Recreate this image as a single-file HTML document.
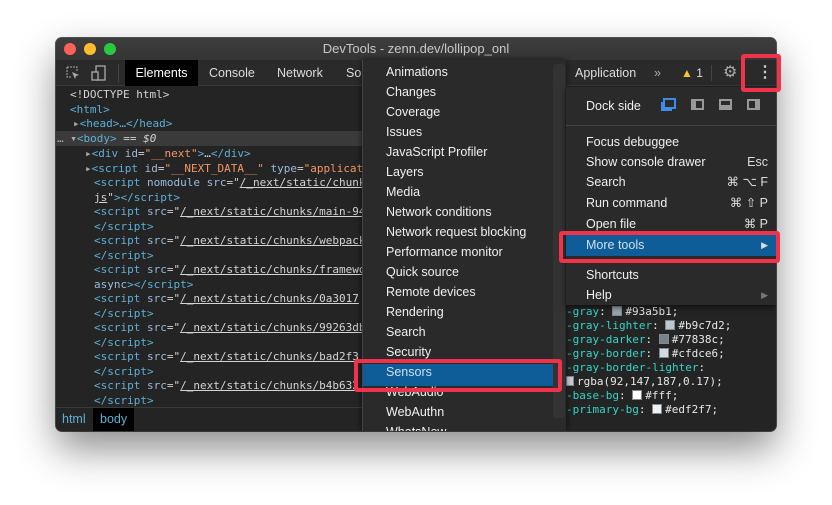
<!DOCTYPE html>
<html><head><style>
*{margin:0;padding:0;box-sizing:border-box}
body{width:832px;height:505px;background:#fff;position:relative;overflow:hidden;font-family:"Liberation Sans",sans-serif}
.win{position:absolute;left:56px;top:38px;width:720px;height:393px;background:#242424;border-radius:6px;overflow:hidden;box-shadow:0 18px 40px rgba(0,0,0,.45),0 0 0 1px #555}
.title{position:absolute;left:0;top:0;width:720px;height:22px;background:linear-gradient(#3d3d3d,#353535);color:#c8c8c8;font-size:13px;text-align:center;line-height:22px}
.dot{position:absolute;top:5px;width:12px;height:12px;border-radius:50%}
.tb{position:absolute;left:0;top:22px;width:720px;height:26px;background:#2a2a2a;border-bottom:1px solid #3a3a3a;color:#ddd;font-size:12.5px}
.tab{position:absolute;top:0;height:26px;line-height:26px}
.code{position:absolute;left:0;top:49px;width:306px;height:320px;font-family:"DejaVu Sans Mono","Liberation Mono",monospace;font-size:11px;color:#d4d4d4;white-space:pre}
.l{position:absolute;height:14.5px;line-height:14.5px}
.t{color:#5db0d7}.a{color:#9bbbdc}.v{color:#f29766}.u{color:#d4d4d4;text-decoration:underline}
.crumb{position:absolute;left:0;top:369px;width:306px;height:24px;border-top:1px solid #3a3a3a;background:#242424;font-size:12.5px;color:#5db0d7}
.sub{position:absolute;left:306px;top:22px;width:204px;height:371px;background:#2a2a2a;border-left:1px solid #444;box-shadow:0 0 6px rgba(0,0,0,.6)}
.sub div.i{position:absolute;left:23px;color:#f0f0f0;font-size:12.5px;height:20px;line-height:20px}
.rm{position:absolute;left:510px;top:49px;width:210px;height:218px;background:#2a2a2a;color:#f0f0f0;font-size:12.5px;box-shadow:0 2px 6px rgba(0,0,0,.6)}
.rm .i{position:absolute;left:20px;height:20px;line-height:20px}
.rm .k{position:absolute;right:8px;height:20px;line-height:20px;color:#ddd}
.red{position:absolute;border:4px solid #f0334a;border-radius:3px}
.sty{position:absolute;left:510px;top:267px;width:210px;height:102px;font-family:"DejaVu Sans Mono","Liberation Mono",monospace;font-size:11px;color:#e8e8e8;white-space:pre}
.sty .n{color:#35d4c7}
.sw{display:inline-block;width:10px;height:10px;border:1px solid #888;vertical-align:-1px;margin-right:3px}
</style></head><body>
<div class="win">
 <div class="title">DevTools - zenn.dev/lollipop_onl
  <div class="dot" style="left:8px;background:#fe5f57"></div>
  <div class="dot" style="left:28px;background:#febc2e"></div>
  <div class="dot" style="left:48px;background:#28c840"></div>
 </div>
 <div class="tb">
  <svg style="position:absolute;left:10px;top:6px" width="14" height="14" viewBox="0 0 14 14"><path d="M1 1h10v4M1 1v10h4" stroke="#aaa" fill="none" stroke-dasharray="2 1"/><path d="M6 6l7 3-3 1-1 3z" fill="#aaa"/></svg>
  <svg style="position:absolute;left:35px;top:5px" width="16" height="16" viewBox="0 0 16 16"><rect x="5" y="1" width="9" height="14" fill="none" stroke="#aaa" stroke-width="1.3"/><rect x="1" y="7" width="6" height="8" fill="#2a2a2a" stroke="#aaa" stroke-width="1.3"/></svg>
  <div style="position:absolute;left:62px;top:4px;width:1px;height:18px;background:#444"></div>
  <div class="tab" style="left:69px;width:73px;background:#000;color:#fff;text-align:center">Elements</div>
  <div class="tab" style="left:153px">Console</div>
  <div class="tab" style="left:221px">Network</div>
  <div class="tab" style="left:290px">So</div>
  <div class="tab" style="left:519px">Application</div>
  <div class="tab" style="left:598px;color:#aaa">»</div>
  <div class="tab" style="left:625px;font-size:12px"><span style="color:#f4c430">▲</span> 1</div>
  <div style="position:absolute;left:655px;top:5px;width:1px;height:16px;background:#444"></div>
  <div class="tab" style="left:667px;color:#aaa;font-size:16px">⚙</div>
  <div class="tab" style="left:701px;color:#ccc;font-size:16px;font-weight:bold">⋮</div>
 </div>
 <div class="code">
  <div style="position:absolute;left:0;top:44px;width:306px;height:14.5px;background:#3a3a3a"></div>
  <div class="l" style="left:14px;top:1px">&lt;!DOCTYPE html&gt;</div>
  <div class="l t" style="left:14px;top:16px">&lt;html&gt;</div>
  <div class="l" style="left:17px;top:30px"><span style="color:#aaa">▸</span><span class="t">&lt;head&gt;…&lt;/head&gt;</span></div>
  <div class="l" style="left:1px;top:45px"><span style="color:#aaa">… ▾</span><span class="t">&lt;body&gt;</span> == <i>$0</i></div>
  <div class="l" style="left:29px;top:60px"><span style="color:#aaa">▸</span><span class="t">&lt;div </span><span class="a">id</span>=<span class="v">"__next"</span><span class="t">&gt;</span>…<span class="t">&lt;/div&gt;</span></div>
  <div class="l" style="left:29px;top:75px"><span style="color:#aaa">▸</span><span class="t">&lt;script </span><span class="a">id</span>=<span class="v">"__NEXT_DATA__"</span> <span class="a">type</span>=<span class="v">"applicat</span></div>
  <div class="l" style="left:38px;top:89px"><span class="t">&lt;script </span><span class="a">nomodule src</span>="<span class="u">/_next/static/chunk</span></div>
  <div class="l" style="left:38px;top:104px"><span class="u">js</span>"<span class="t">&gt;&lt;/script&gt;</span></div>
  <div class="l" style="left:38px;top:118px"><span class="t">&lt;script </span><span class="a">src</span>="<span class="u">/_next/static/chunks/main-94</span></div>
  <div class="l t" style="left:38px;top:133px">&lt;/script&gt;</div>
  <div class="l" style="left:38px;top:147px"><span class="t">&lt;script </span><span class="a">src</span>="<span class="u">/_next/static/chunks/webpack</span></div>
  <div class="l t" style="left:38px;top:162px">&lt;/script&gt;</div>
  <div class="l" style="left:38px;top:176px"><span class="t">&lt;script </span><span class="a">src</span>="<span class="u">/_next/static/chunks/framewo</span></div>
  <div class="l" style="left:38px;top:191px"><span class="a">async</span><span class="t">&gt;&lt;/script&gt;</span></div>
  <div class="l" style="left:38px;top:205px"><span class="t">&lt;script </span><span class="a">src</span>="<span class="u">/_next/static/chunks/0a3017</span></div>
  <div class="l t" style="left:38px;top:220px">&lt;/script&gt;</div>
  <div class="l" style="left:38px;top:234px"><span class="t">&lt;script </span><span class="a">src</span>="<span class="u">/_next/static/chunks/99263db</span></div>
  <div class="l t" style="left:38px;top:249px">&lt;/script&gt;</div>
  <div class="l" style="left:38px;top:263px"><span class="t">&lt;script </span><span class="a">src</span>="<span class="u">/_next/static/chunks/bad2f3</span></div>
  <div class="l t" style="left:38px;top:278px">&lt;/script&gt;</div>
  <div class="l" style="left:38px;top:292px"><span class="t">&lt;script </span><span class="a">src</span>="<span class="u">/_next/static/chunks/b4b632</span></div>
  <div class="l t" style="left:38px;top:307px">&lt;/script&gt;</div>
 </div>
 <div class="crumb"><span style="position:absolute;left:6px;top:4px">html</span><span style="position:absolute;left:37px;top:0;width:41px;height:24px;background:#000;padding:4px 0 0 7px">body</span></div>
 <div class="sty">
  <div style="position:absolute;left:0;top:0"><span class="n">-gray</span>: <span class="sw" style="background:#93a5b1"></span>#93a5b1;</div>
  <div style="position:absolute;left:0;top:14px"><span class="n">-gray-lighter</span>: <span class="sw" style="background:#b9c7d2"></span>#b9c7d2;</div>
  <div style="position:absolute;left:0;top:28px"><span class="n">-gray-darker</span>: <span class="sw" style="background:#77838c"></span>#77838c;</div>
  <div style="position:absolute;left:0;top:42px"><span class="n">-gray-border</span>: <span class="sw" style="background:#cfdce6"></span>#cfdce6;</div>
  <div style="position:absolute;left:0;top:56px"><span class="n">-gray-border-lighter</span>:</div>
  <div style="position:absolute;left:0;top:70px"><span class="sw" style="background:#ccd;width:8px"></span>rgba(92,147,187,0.17);</div>
  <div style="position:absolute;left:0;top:84px"><span class="n">-base-bg</span>: <span class="sw" style="background:#fff"></span>#fff;</div>
  <div style="position:absolute;left:0;top:98px"><span class="n">-primary-bg</span>: <span class="sw" style="background:#edf2f7"></span>#edf2f7;</div>
 </div>
 <div class="sub">
  <div style="position:absolute;left:190px;top:4px;width:12px;height:354px;background:#333;border-radius:3px"></div>
  <div style="position:absolute;left:0;top:304px;width:190px;height:22px;background:#0e5d99"></div>
  <div class="i" style="top:2px">Animations</div>
  <div class="i" style="top:22px">Changes</div>
  <div class="i" style="top:42px">Coverage</div>
  <div class="i" style="top:62px">Issues</div>
  <div class="i" style="top:82px">JavaScript Profiler</div>
  <div class="i" style="top:102px">Layers</div>
  <div class="i" style="top:122px">Media</div>
  <div class="i" style="top:142px">Network conditions</div>
  <div class="i" style="top:162px">Network request blocking</div>
  <div class="i" style="top:182px">Performance monitor</div>
  <div class="i" style="top:202px">Quick source</div>
  <div class="i" style="top:222px">Remote devices</div>
  <div class="i" style="top:242px">Rendering</div>
  <div class="i" style="top:262px">Search</div>
  <div class="i" style="top:282px">Security</div>
  <div class="i" style="top:302px;color:#cfe0ef">Sensors</div>
  <div class="i" style="top:322px">WebAudio</div>
  <div class="i" style="top:342px">WebAuthn</div>
  <div class="i" style="top:362px">WhatsNew</div>
 </div>
 <div class="rm">
  <div class="i" style="top:9px">Dock side</div>
  <div style="position:absolute;left:97px;top:11px;width:13px;height:11px;border:2px solid #3b8de8;box-shadow:-3px 3px 0 -1px #3b8de8"></div>
  <div style="position:absolute;left:125px;top:12px;width:13px;height:11px;border:2px solid #999;border-left-width:5px"></div>
  <div style="position:absolute;left:153px;top:12px;width:13px;height:11px;border:2px solid #999;border-bottom-width:5px"></div>
  <div style="position:absolute;left:181px;top:12px;width:13px;height:11px;border:2px solid #999;border-right-width:5px"></div>
  <div style="position:absolute;left:0;top:38px;width:210px;height:1px;background:#444"></div>
  <div class="i" style="top:45px">Focus debuggee</div>
  <div class="i" style="top:65px">Show console drawer</div><div class="k" style="top:65px">Esc</div>
  <div class="i" style="top:85px">Search</div><div class="k" style="top:85px">⌘ ⌥ F</div>
  <div class="i" style="top:106px">Run command</div><div class="k" style="top:106px">⌘ ⇧ P</div>
  <div class="i" style="top:127px">Open file</div><div class="k" style="top:127px">⌘ P</div>
  <div style="position:absolute;left:0;top:148px;width:210px;height:21px;background:#0e5d99"></div>
  <div class="i" style="top:148px;color:#cfe0ef">More tools</div><div class="k" style="top:148px;font-size:9px">▶</div>
  <div style="position:absolute;left:0;top:174px;width:210px;height:1px;background:#444"></div>
  <div class="i" style="top:178px">Shortcuts</div>
  <div class="i" style="top:198px">Help</div><div class="k" style="top:198px;font-size:9px;color:#777">▶</div>
 </div>
</div>
<div class="red" style="left:741px;top:54px;width:40px;height:38px"></div>
<div class="red" style="left:559px;top:231px;width:221px;height:32px"></div>
<div class="red" style="left:354px;top:359px;width:208px;height:33px"></div>
</body></html>
